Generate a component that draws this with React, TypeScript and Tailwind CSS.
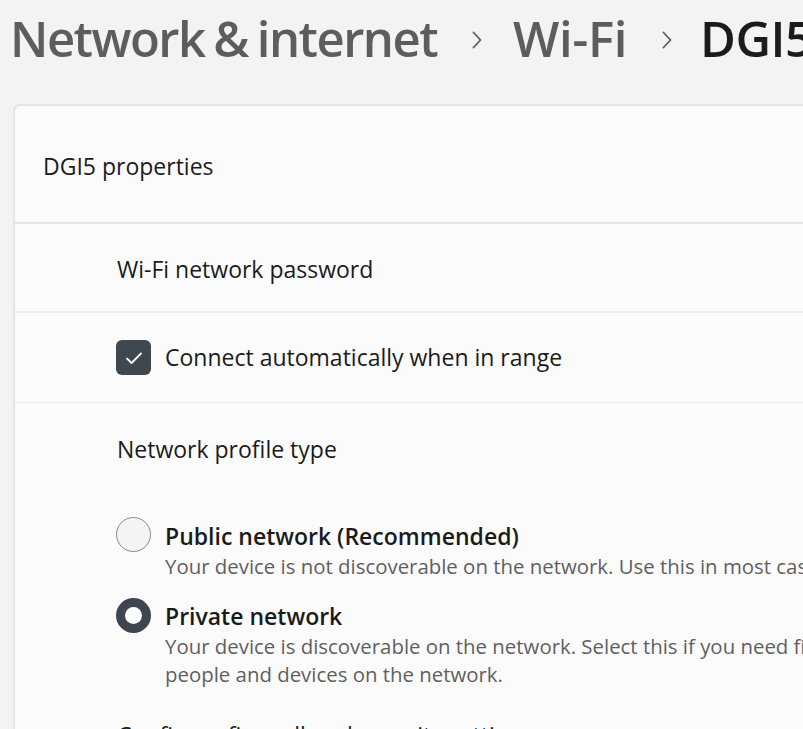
import React from "react";

const font = { fontFamily: '"Open Sans", "Noto Sans", sans-serif' };

function Chevron() {
  return (
    <svg width="10" height="18" viewBox="0 0 10 18" className="ml-[35px] mr-[31px] mt-[4px] shrink-0">
      <path d="M1.5 1.5 L8.5 9 L1.5 16.5" fill="none" stroke="#5d5d5d" strokeWidth="1.8" strokeLinecap="round" strokeLinejoin="round" />
    </svg>
  );
}

function Checkbox() {
  return (
    <div className="flex h-[35px] w-[35px] shrink-0 items-center justify-center rounded-[6px] bg-[#3f474f]">
      <svg width="20" height="16" viewBox="0 0 20 16">
        <path d="M3 8.5 L7.5 13 L17 3.5" fill="none" stroke="#ffffff" strokeWidth="1.8" strokeLinecap="round" strokeLinejoin="round" />
      </svg>
    </div>
  );
}

function Radio({ checked }: { checked: boolean }) {
  return checked ? (
    <div className="flex h-[35px] w-[35px] shrink-0 items-center justify-center rounded-full bg-[#3d464e]">
      <div className="h-[17px] w-[17px] rounded-full bg-white" />
    </div>
  ) : (
    <div className="h-[35px] w-[35px] shrink-0 rounded-full border-[1.5px] border-[#8b8b8b] bg-[#f4f4f4]" />
  );
}

export default function App() {
  return (
    <div className="h-[729px] w-[803px] overflow-hidden bg-[#f3f3f3]" style={font}>
      <div className="flex items-center whitespace-nowrap pl-[10px] pt-[6px] text-[49px] font-semibold leading-[64px]">
        <span className="tracking-[-1.5px] text-[#5d5d5d] [word-spacing:-2.5px]">Network &amp; internet</span>
        <Chevron />
        <span className="tracking-[-0.3px] text-[#5d5d5d]">Wi-Fi</span>
        <Chevron />
        <span className="-ml-[3px] tracking-[-0.5px] text-[#1b1b1b]">DGI5 properties</span>
      </div>

      <div className="ml-[13px] mt-[34px] rounded-tl-[7px] border-l-2 border-t-2 border-[#e5e5e5] bg-[#fbfbfb]">
        <div className="flex h-[118px] items-center border-b-2 border-[#e5e5e5] pl-[28px] pt-[4px] text-[23px] text-[#1b1b1b]">
          DGI5 properties
        </div>

        <div className="flex h-[89px] items-center border-b-2 border-[#ebebeb] pl-[102px] pt-[3px] text-[23px] text-[#1b1b1b]">
          Wi-Fi network password
        </div>

        <div className="flex h-[90px] items-center gap-[14px] border-b border-[#ececec] pl-[101px] text-[23px] text-[#1b1b1b]">
          <Checkbox />
          <span>Connect automatically when in range</span>
        </div>

        <div className="pl-[102px] pt-[30px] text-[#1b1b1b]">
          <div className="text-[23px] leading-[32px]">Network profile type</div>

          <div className="-ml-px mt-[52px] flex items-start gap-[14px]">
            <Radio checked={false} />
            <div className="mt-[3px]">
              <div className="text-[23px] font-semibold leading-[32px]">Public network (Recommended)</div>
              <div className="whitespace-nowrap text-[20.4px] leading-[29px] text-[#5f5f5f]">
                Your device is not discoverable on the network. Use this in most cases—at home, at work, or in public places.
              </div>
            </div>
          </div>

          <div className="-ml-px mt-[17px] flex items-start gap-[14px]">
            <Radio checked={true} />
            <div className="mt-[2px]">
              <div className="text-[23px] font-semibold leading-[32px]">Private network</div>
              <div className="text-[20.4px] leading-[28px] text-[#5f5f5f]">
                <div className="whitespace-nowrap">Your device is discoverable on the network. Select this if you need file sharing or use apps that</div>
                <div className="whitespace-nowrap">people and devices on the network.</div>
              </div>
            </div>
          </div>

          <div className="mt-[31px] text-[23px] leading-[32px]">Configure firewall and security settings</div>
        </div>
      </div>
    </div>
  );
}
